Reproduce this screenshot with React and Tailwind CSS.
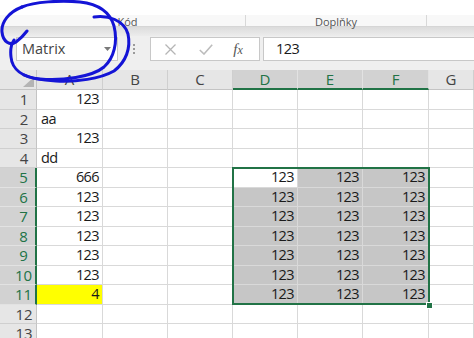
import React from "react";

const COLS = [
  { k: "A", w: "w-[66px]" },
  { k: "B", w: "w-[65px]" },
  { k: "C", w: "w-[65px]" },
  { k: "D", w: "w-[65px]" },
  { k: "E", w: "w-[65px]" },
  { k: "F", w: "w-[66px]" },
  { k: "G", w: "w-[45px]" },
];

const SEL_COLS = ["D", "E", "F"];

const rows = [
  { n: 1, A: ["123", "r"] },
  { n: 2, A: ["aa", "l"] },
  { n: 3, A: ["123", "r"] },
  { n: 4, A: ["dd", "l"] },
  { n: 5, A: ["666", "r"], sel: true },
  { n: 6, A: ["123", "r"], sel: true },
  { n: 7, A: ["123", "r"], sel: true },
  { n: 8, A: ["123", "r"], sel: true },
  { n: 9, A: ["123", "r"], sel: true },
  { n: 10, A: ["123", "r"], sel: true },
  { n: 11, A: ["4", "r"], sel: true, yellow: true },
  { n: 12 },
  { n: 13 },
];

function Cell({ col, row }) {
  let bg = "bg-white";
  let content = null;
  let align = "justify-end pr-[3px]";
  if (col.k === "A" && row.A) {
    content = row.A[0];
    align = row.A[1] === "l" ? "justify-start pl-[4px]" : "justify-end pr-[3px]";
    if (row.yellow) bg = "bg-[#ffff00]";
  }
  if (row.sel && SEL_COLS.includes(col.k)) {
    content = "123";
    bg = row.n === 5 && col.k === "D" ? "bg-white" : "bg-[#c6c6c6]";
  }
  return (
    <div
      className={`${col.w} h-full shrink-0 flex items-center ${align} ${bg} border-r border-b border-[#d9d9d9] text-[14.5px] tracking-[-0.6px] text-[#1a1a1a]`}
    >
      {content}
    </div>
  );
}

function Scribble() {
  return (
    <svg
      className="absolute left-0 top-0 pointer-events-none"
      width="140"
      height="92"
      viewBox="0 0 140 92"
      fill="none"
      stroke="#1414d6"
      strokeWidth="3"
      strokeLinecap="round"
      strokeLinejoin="round"
    >
      <path d="M22 7 C9 12 1 22 2 32 C3 42 10 46 16 42 C20 39 24 35 27 31" />
      <path d="M22 7 C34 2 60 0 80 2 C98 4 110 12 114 26 C118 42 114 58 104 67 C92 77 62 81 40 79 C22 77 12 69 11 57 C10 49 12 43 14 40" />
      <path d="M94 17 C108 15 124 20 128 34 C131 48 126 62 114 71 C100 79 76 82 56 81 C40 80 30 78 24 75" />
    </svg>
  );
}

export default function App() {
  return (
    <div
      className="relative w-[474px] h-[338px] overflow-hidden bg-white"
      style={{ fontFamily: '"Open Sans", "Liberation Sans", sans-serif' }}
    >
      {/* Ribbon group labels */}
      <div className="h-[15px] bg-white" />
      <div className="h-[12px] bg-[#f8f8f8] border-b border-[#d6d6d6] flex text-[11px] leading-none text-[#555]">
        <div className="w-[10px] shrink-0" />
        <div className="w-[236px] shrink-0 flex items-start justify-center pt-[1px] border-r border-[#d8d8d8]">
          Kód
        </div>
        <div className="w-[181px] shrink-0 flex items-start justify-center pt-[1px] border-r border-[#d8d8d8]">
          Doplňky
        </div>
        <div className="flex-1" />
      </div>
      <div className="h-[9px] bg-gradient-to-b from-[#dcdcdc] to-[#ececec]" />

      {/* Formula bar row */}
      <div className="h-[25px] flex bg-[#efefef] pt-[1px]">
        <div className="w-[16px] shrink-0" />
        <div className="w-[102px] shrink-0 bg-white border border-[#c8c8c8] flex items-center justify-between pl-[5px] pr-[6px] text-[14.5px] text-[#444]">
          <span>Matrix</span>
          <svg width="7" height="4" viewBox="0 0 7 4">
            <path d="M0 0 L7 0 L3.5 4 Z" fill="#7a7a7a" />
          </svg>
        </div>
        <div className="w-[32px] shrink-0 flex flex-col items-center justify-center gap-[2px]">
          <div className="w-[2px] h-[2px] bg-[#9a9a9a]" />
          <div className="w-[2px] h-[2px] bg-[#9a9a9a]" />
          <div className="w-[2px] h-[2px] bg-[#9a9a9a]" />
        </div>
        <div className="w-[110px] shrink-0 bg-white border border-[#c8c8c8] flex items-center">
          <div className="w-[34px] flex justify-center pl-[4px]">
            <svg width="11" height="11" viewBox="0 0 11 11" stroke="#b5b5b5" strokeWidth="1.3" fill="none">
              <path d="M0.5 0.5 L10.5 10.5 M10.5 0.5 L0.5 10.5" />
            </svg>
          </div>
          <div className="w-[38px] flex justify-center pl-[4px]">
            <svg width="14" height="11" viewBox="0 0 14 11" stroke="#bcbcbc" strokeWidth="1.6" fill="none">
              <path d="M0.8 6 L5 10 L13.2 0.8" />
            </svg>
          </div>
          <div
            className="flex-1 flex justify-center text-[15px] italic text-[#555] leading-none pr-[6px]"
            style={{ fontFamily: '"Liberation Serif", serif' }}
          >
            f<span className="text-[12px] translate-y-[2px]">x</span>
          </div>
        </div>
        <div className="w-[3px] shrink-0" />
        <div className="flex-1 bg-white border-y border-l border-[#c8c8c8] flex items-center pl-[12px] text-[14.5px] tracking-[-0.6px] text-[#1a1a1a]">
          123
        </div>
      </div>
      <div className="h-[9px] bg-[#efefef]" />

      {/* Column headers */}
      <div className="h-[20px] flex">
        <div className="w-[37px] shrink-0 bg-[#e6e6e6] border-r border-b border-[#c4c4c4] relative">
          <svg className="absolute right-[2px] bottom-[2px]" width="11" height="10" viewBox="0 0 11 10">
            <path d="M11 0 L11 10 L0 10 Z" fill="#b4b4b4" />
          </svg>
        </div>
        {COLS.map((c) => {
          const sel = SEL_COLS.includes(c.k);
          return (
            <div
              key={c.k}
              className={`${c.w} shrink-0 flex items-center justify-center text-[15px] ${
                sel
                  ? "bg-[#d2d2d2] text-[#217346] border-b-2 border-b-[#217346] border-r border-r-[#e2e2e2] pt-[1px]"
                  : "bg-[#e6e6e6] text-[#444] border-b border-b-[#c4c4c4] border-r border-r-[#cfcfcf]"
              }`}
            >
              {c.k}
            </div>
          );
        })}
      </div>

      {/* Rows */}
      {rows.map((r) => (
        <div key={r.n} className="h-[19.5px] flex">
          <div
            className={`w-[37px] shrink-0 flex items-center justify-center pl-[13px] pr-[1px] text-[15px] border-b ${
              r.sel
                ? "bg-[#d2d2d2] text-[#217346] border-b-[#e2e2e2] border-r-2 border-r-[#217346]"
                : "bg-[#e6e6e6] text-[#444] border-b-[#cfcfcf] border-r border-r-[#c4c4c4]"
            }`}
          >
            {r.n}
          </div>
          {COLS.map((c) => (
            <Cell key={c.k} col={c} row={r} />
          ))}
        </div>
      ))}

      {/* Selection overlay */}
      <div className="absolute left-[232px] top-[166.5px] w-[198px] h-[138.5px] border-2 border-[#217346] pointer-events-none" />
      <div className="absolute left-[426px] top-[301.5px] w-[7px] h-[7px] bg-[#217346] border border-white pointer-events-none" />

      <Scribble />
    </div>
  );
}
